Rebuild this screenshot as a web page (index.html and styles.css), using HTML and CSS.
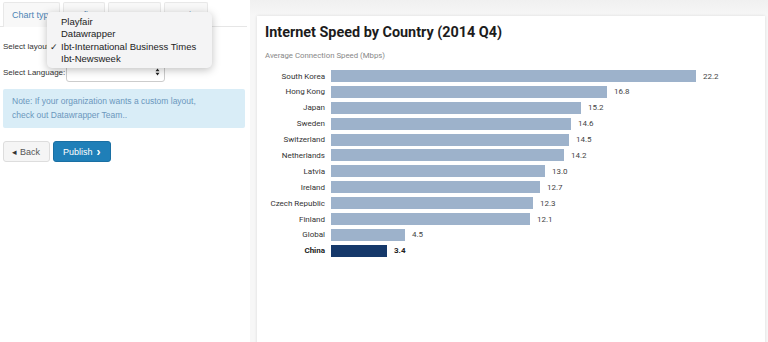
FILE: index.html
```html
<!DOCTYPE html>
<html>
<head>
<meta charset="utf-8">
<link rel="stylesheet" href="styles.css">
</head>
<body>
<div class="page">
  <div class="side">
    <div class="tabs">
      <div class="tab">Chart type</div>
      <div class="tab">Refine</div>
      <div class="tab">Annotate</div>
      <div class="tab">Design</div>
    </div>
    <div class="field field-layout">
      <span class="lbl">Select layout:</span>
    </div>
    <div class="field field-lang">
      <span class="lbl">Select Language:</span>
      <div class="select"><svg class="updown" width="5" height="8" viewBox="0 0 5 8"><path d="M0.5 3.2 L2.5 0.6 L4.5 3.2 Z M0.5 4.8 L2.5 7.4 L4.5 4.8 Z" fill="#222"/></svg></div>
    </div>
    <div class="note">Note: If your organization wants a custom layout, check out Datawrapper Team..</div>
    <div class="buttons">
      <button class="btn btn-back"><span class="chev">&#9666;</span> Back</button>
      <button class="btn btn-publish">Publish <span class="chev2">&#8250;</span></button>
    </div>
    <div class="menu">
      <div class="item">Playfair</div>
      <div class="item">Datawrapper</div>
      <div class="item checked"><span class="check">&#10003;</span>Ibt-International Business Times</div>
      <div class="item">Ibt-Newsweek</div>
    </div>
  </div>
  <div class="stage">
    <div class="card">
      <h1 class="title">Internet Speed by Country (2014 Q4)</h1>
      <div class="subtitle">Average Connection Speed (Mbps)</div>
      <div class="chart">
        <div class="row"><span class="name">South Korea</span><span class="bar" style="width:365px"></span><span class="val">22.2</span></div>
        <div class="row"><span class="name">Hong Kong</span><span class="bar" style="width:276px"></span><span class="val">16.8</span></div>
        <div class="row"><span class="name">Japan</span><span class="bar" style="width:250px"></span><span class="val">15.2</span></div>
        <div class="row"><span class="name">Sweden</span><span class="bar" style="width:240px"></span><span class="val">14.6</span></div>
        <div class="row"><span class="name">Switzerland</span><span class="bar" style="width:238px"></span><span class="val">14.5</span></div>
        <div class="row"><span class="name">Netherlands</span><span class="bar" style="width:233px"></span><span class="val">14.2</span></div>
        <div class="row"><span class="name">Latvia</span><span class="bar" style="width:214px"></span><span class="val">13.0</span></div>
        <div class="row"><span class="name">Ireland</span><span class="bar" style="width:209px"></span><span class="val">12.7</span></div>
        <div class="row"><span class="name">Czech Republic</span><span class="bar" style="width:202px"></span><span class="val">12.3</span></div>
        <div class="row"><span class="name">Finland</span><span class="bar" style="width:199px"></span><span class="val">12.1</span></div>
        <div class="row"><span class="name">Global</span><span class="bar" style="width:74px"></span><span class="val">4.5</span></div>
        <div class="row hl"><span class="name">China</span><span class="bar" style="width:56px"></span><span class="val">3.4</span></div>
      </div>
    </div>
  </div>
</div>
</body>
</html>
```

FILE: styles.css
```css
* { box-sizing: border-box; }
html, body { margin: 0; padding: 0; background: #fff; }
body { font-family: "Liberation Sans", Arial, sans-serif; color: #333; width: 768px; height: 342px; overflow: hidden; }

.page { display: flex; height: 342px; }

.side { position: relative; width: 250px; flex: none; padding: 0 5px 0 3px; }

.tabs { display: flex; gap: 3px; height: 27px; border-bottom: 1px solid #e6e6e6; padding-top: 2px; margin-right: -2px; margin-left: -3px; padding-left: 3px; }
.tab { height: 25px; padding: 7px 8px 0; font-size: 9px; color: #4c84b6; background: #f8f8f8; border: 1px solid #e8e8e8; border-bottom: none; border-radius: 2px 2px 0 0; white-space: nowrap; overflow: hidden; }
.tab:nth-child(1) { width: 57px; }
.tab:nth-child(2) { width: 42px; }
.tab:nth-child(3) { width: 53px; }
.tab:nth-child(4) { width: 44px; }

.field { display: flex; align-items: center; font-size: 8px; color: #333; }
.field-layout { height: 20px; margin-top: 9px; }
.field-lang { height: 20px; margin-top: 6px; gap: 1px; }
.select { width: 99px; height: 19px; border: 1px solid #ccc; border-radius: 3px; background: #fff; display: flex; align-items: center; justify-content: flex-end; padding-right: 4px; }

.note { margin-top: 7px; background: #d9edf7; color: #6b97bd; font-size: 8.5px; line-height: 14px; padding: 5px 26px 6px 9px; border-radius: 2px; width: 242px; }

.buttons { display: flex; gap: 3px; margin-top: 13px; }
.btn { font-family: "Liberation Sans", Arial, sans-serif; font-size: 9px; height: 21px; border-radius: 3px; padding: 0 8px; display: flex; align-items: center; }
.btn-back { width: 47px; background: #f5f5f5; border: 1px solid #ddd; color: #555; }
.btn-back .chev { font-size: 9px; margin-right: 3px; color: #333; }
.btn-publish { width: 58px; background: #1f7fb8; border: 1px solid #1a6fa3; color: #fff; padding-left: 9px; }
.btn-publish .chev2 { font-weight: bold; font-size: 12px; margin-left: 4px; line-height: 1; }

.menu { position: absolute; left: 47px; top: 12px; width: 165px; height: 56px; background: #f4f4f5; border-radius: 5px; box-shadow: 0 2px 8px rgba(0,0,0,0.25); padding: 4px 0 0 14px; }
.item { position: relative; font-size: 9.5px; line-height: 12.4px; color: #222; }
.check { position: absolute; left: -11px; top: 0; font-size: 9px; }

.stage { flex: 1; background: linear-gradient(#f0f0f0, #f7f7f7 16px, #f7f7f7); padding: 16px 3px 0 7px; }
.card { background: #fff; height: 340px; box-shadow: 0 0 3px rgba(0,0,0,0.12); padding: 8px 0 0 8px; font-family: Roboto, "Liberation Sans", sans-serif; }
.title { margin: 0; font-size: 14.4px; font-weight: bold; color: #1c1c1c; line-height: 18px; }
.subtitle { font-size: 7.8px; color: #888; margin-top: 9px; line-height: 10px; }

.chart { margin-top: 9px; display: flex; flex-direction: column; gap: 3.9px; }
.row { display: flex; align-items: center; height: 12px; font-size: 8px; color: #333; }
.name { width: 60px; text-align: right; margin-right: 6px; flex: none; }
.bar { height: 12px; background: #9db2cb; flex: none; }
.val { margin-left: 7px; color: #444; }
.hl .name, .hl .val { font-weight: bold; color: #222; }
.hl .bar { background: #15386a; }
.updown { display: block; }
```
